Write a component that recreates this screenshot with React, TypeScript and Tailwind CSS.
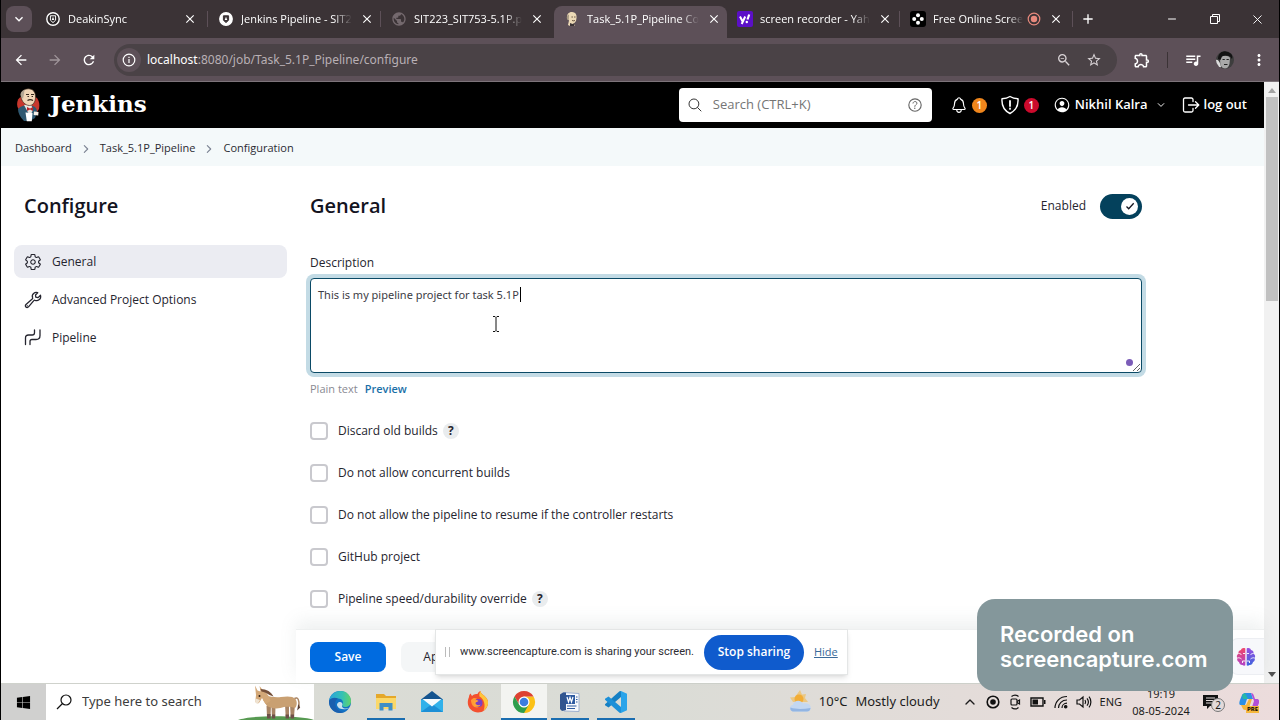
import type { ReactNode } from "react"
import clsx from "clsx"
import { ChevronUp, Minus, X } from "lucide-react"
import { FaWindows } from "react-icons/fa"
import {
  IoChevronDown,
  IoChevronForward,
  IoHelpCircleOutline,
  IoNotificationsOutline,
  IoPersonCircleOutline,
  IoSearchOutline,
  IoSettingsOutline,
} from "react-icons/io5"
import {
  MdAdd,
  MdArrowBack,
  MdArrowForward,
  MdClose,
  MdKeyboardArrowDown,
  MdMoreVert,
  MdOutlineExtension,
  MdPublic,
  MdQueueMusic,
  MdRefresh,
  MdStarOutline,
  MdZoomOut,
} from "react-icons/md"

/* ---------- drawings ---------- */

function DeakinIcon({ filled }: { filled?: boolean }) {
  return (
    <svg viewBox="0 0 16 16" className="size-4">
      <circle cx="8" cy="8" r="6.2" fill={filled ? "#fff" : "#2a2527"} stroke="#fff" strokeWidth="1.4" />
      <path
        d="M5.4 4.8h5.2v4.4L8 11.6 5.4 9.2Z"
        fill={filled ? "#3b3336" : "none"}
        stroke={filled ? "#3b3336" : "#fff"}
        strokeWidth="1"
      />
      <path d="M8 5.8 9.3 9H6.7Z" fill="#fff" />
    </svg>
  )
}

function JenkinsFavicon() {
  return (
    <svg viewBox="0 0 16 16" className="size-4">
      <path d="M4 14 5 9.5 3 7C2.6 3 5 .8 8.2 1c3 .2 4.6 2.2 4.4 5.6L12 10l-2 2.5.6 2.5H6Z" fill="#ecd9b6" />
      <path d="M4 3.5C2.5 5 2.6 7.5 3.4 9l1.4-.6L5 4Z" fill="#a79a83" />
      <path d="M7.500 6h1.300M10.200 6h1.300M8 9.300c1 .7 2 .7 3 0" stroke="#5a4634" strokeWidth="1" fill="none" />
      <path d="m6 12 2.500 1 2-1-.5 3H6Z" fill="#3a3335" />
    </svg>
  )
}

function YahooIcon() {
  return (
    <svg viewBox="0 0 16 16" className="size-4">
      <rect width="16" height="16" rx="2" fill="#5b0fc7" />
      <path d="m3 5.500 2.600 5M8.200 5.500 4.700 13" stroke="#fff" strokeWidth="2" fill="none" />
      <path d="m12.200 3.500-1.700 5" stroke="#fff" strokeWidth="2.2" />
      <circle cx="9.8" cy="11" r="1.2" fill="#fff" />
    </svg>
  )
}

function RecorderIcon() {
  return (
    <svg viewBox="0 0 16 16" className="size-4">
      <rect width="16" height="16" rx="3" fill="#000" />
      <g fill="#fff">
        <circle cx="8" cy="4.2" r="2" />
        <circle cx="8" cy="11.8" r="2" />
        <circle cx="4.2" cy="8" r="2" />
        <circle cx="11.8" cy="8" r="2" />
      </g>
    </svg>
  )
}

function RestoreIcon() {
  return (
    <svg viewBox="0 0 10 10" className="size-[10px]" fill="none" stroke="#fff">
      <path d="M.5 2.500h7v7h-7zM2.500 2.500v-2h7v7h-2" />
    </svg>
  )
}

function Avatar() {
  return (
    <svg viewBox="0 0 18 18" className="size-[18px]">
      <clipPath id="face">
        <circle cx="9" cy="9" r="9" />
      </clipPath>
      <g clipPath="url(#face)">
        <rect width="18" height="18" fill="#3d3d3d" />
        <path d="M4 7c1-3 9-3 10 0l-.5 6c-1 3-2.500 4.500-4.500 4.500s-4-1.500-4.700-4.500Z" fill="#a8a8a8" />
        <path d="M2 8C2 1 8-1 12 1c4 1 5 4 4 7l-2-2.500C11 4 8 4 6 5.500L4.500 9Z" fill="#131313" />
        <path d="M6.500 8.500h2.300M10.500 8.500h2.300M8 13.500h3.500" stroke="#222" strokeWidth="1.2" />
        <path d="M0 9c2-1 4 2 5 7l-3 2H0Z" fill="#dcdcdc" />
      </g>
    </svg>
  )
}

function JenkinsLogo() {
  return (
    <svg viewBox="0 0 24 34" className="h-[34px] w-6">
      <path d="M1.500 19C0 13 3 8 8 8h10c5 2 6 8 5 13l-4 6H6Z" fill="#c8372d" />
      <path d="M2 21c3-3 6-4 9-4l6 1c3 1 4 3 4 6l-2 6-5 3H8c-4-4-6-8-6-12Z" fill="#2f5870" />
      <path d="M8 17 15 16l2 6-3 6Z" fill="#e9e6e0" />
      <path d="m11 19 3 1.500 3-1.500v4l-3-1.500-3 1.500Z" fill="#b9262b" />
      <path
        d="M5 9C4 4 8 .7 12.500.8 17 1 19.600 4 19.500 9c0 5-2.500 8.500-6 8.500C9 17.500 5.500 13 5 9Z"
        fill="#f0d6b7"
        stroke="#3b2b20"
        strokeWidth=".7"
      />
      <path d="M5 8C3.500 5.500 6 2.500 8.500 2L8 6l-1 5Z" fill="#b3a693" />
      <path
        d="M10 6.500h3M15 6.500h3M11.500 8.500h1.400M15.600 8.500H17M11.500 12.500c1.500-1 4-1 5.500 0"
        stroke="#33261c"
        strokeWidth="1.1"
        fill="none"
      />
      <path d="m9.500 24.500 7 .4-.7 8.300h-5Z" fill="#fff" />
      <path d="m18 23.500 4.500.4-.3 3.600-4.500-.4Z" fill="#f6efe6" />
    </svg>
  )
}

function ShieldIcon() {
  return (
    <svg
      viewBox="0 0 20 20"
      className="size-5"
      fill="none"
      stroke="#fff"
      strokeWidth="1.4"
      strokeLinecap="round"
      strokeLinejoin="round"
    >
      <path d="M10 1.500C7.500 3 5 3.600 2 3.800c-.5 7 2 11.700 8 14.700 6-3 8.500-7.700 8-14.700-3-.2-5.500-.8-8-2.300Z" />
      <path d="M10 6v5M10 13.500v.4" strokeWidth="1.8" />
    </svg>
  )
}

function LogoutIcon() {
  return (
    <svg
      viewBox="0 0 18 18"
      className="size-[18px]"
      fill="none"
      stroke="#fff"
      strokeWidth="1.3"
      strokeLinecap="round"
      strokeLinejoin="round"
    >
      <path d="M11 5.500V3.500C11 2.500 10.200 2 9.500 2H3C2 2 1.500 2.700 1.500 3.500v11c0 1 .7 1.500 1.500 1.500h6.500c1 0 1.500-.7 1.500-1.500v-2" />
      <path d="M6.500 9h10M13.500 5.700 16.800 9l-3.300 3.300" />
    </svg>
  )
}

function WrenchIcon() {
  return (
    <svg
      viewBox="0 0 18 18"
      className="size-[18px]"
      fill="none"
      stroke="#25252f"
      strokeWidth="1.3"
      strokeLinecap="round"
      strokeLinejoin="round"
    >
      <path d="M16.500 4.300c.5 2-.2 3.600-1.500 4.500-1.200.9-2.700.9-3.900.5-.5-.2-1 0-1.300.4l-5.300 6.200c-.7.8-1.900.8-2.600.1s-.7-1.900.1-2.600l6.200-5.300c.4-.3.6-.8.4-1.300-.5-1.400-.3-3.300 1-4.400 1.200-1 2.700-1.200 4.100-.7L11.500 4l.3 2.200 2.300.4Z" />
      <path d="M3.200 14.800h.1" />
    </svg>
  )
}

function PipelineIcon() {
  return (
    <svg viewBox="0 0 18 18" className="size-[18px]" fill="none" stroke="#25252f" strokeWidth="1.3" strokeLinecap="round">
      <path d="M1.500 15.500V9c0-2 1-3 3-3h3.700c1.600 0 2.300-.7 2.300-2.300V1" />
      <path d="M6 15.500v-3c0-1.500.6-2 2-2h4c2.600 0 4-1.400 4-4V1" />
    </svg>
  )
}

function Donkey() {
  return (
    <svg viewBox="0 0 76 36" className="h-9 w-[76px] self-end">
      <path d="M0 36c12-5 62-5 76 0Z" fill="#579a52" />
      <path
        d="M28.500 22h4.500l-.5 11H29ZM33.500 22h4l-.3 11h-3.300ZM47 20h4v13h-3.300ZM52 20h5l-1 13h-3.300Z"
        fill="#a88465"
      />
      <path d="M29 30h3.600v4.500H29ZM34 30.500h3.200v4H34ZM47.600 30.500h3.400v4h-3.400ZM52.600 30.500h3.500v4h-3.500Z" fill="#6d5049" />
      <path d="M27 11c5 2 11 2.500 16 2 6-1 12-1 14.500 2 2 3 1.500 7-.5 9-4-1.500-8-1.500-11-1-5 2-12 2-17-1l-4-6Z" fill="#c9a072" />
      <path d="M17 1.500 19.500 6.500l3 1L21.500 2l4 5c4 2 6 6 7 10l-5 3-3.500-6-3 5c-3 1-4-1-3.500-3l.5-5Z" fill="#d3a878" />
      <path d="M22.500 5c6 0 11 3 13 7.500l-4-1.500c-3-2-5-3-8-3.500Z" fill="#75503a" />
      <path d="M17.500 14.500 22 16l-2 3.500c-3 .5-3-3-2.500-5Z" fill="#efe3d2" />
      <circle cx="21.500" cy="12" r="1" fill="#2a1b14" />
      <path d="M56.500 14.500c3.500-2 5 2 4.500 8" stroke="#a88465" strokeWidth="1.5" fill="none" />
      <path d="m60.200 20-1 6.500 3-3Z" fill="#5c3f33" />
    </svg>
  )
}

function EdgeIcon() {
  return (
    <svg viewBox="0 0 24 24" className="size-6">
      <defs>
        <linearGradient id="edgeTop" x1="0" x2="1">
          <stop offset="0" stopColor="#2aa3dd" />
          <stop offset=".6" stopColor="#35c1b4" />
          <stop offset="1" stopColor="#62d36a" />
        </linearGradient>
      </defs>
      <circle cx="12" cy="12" r="11" fill="#1272c4" />
      <path d="M1 11C2 4.500 7 1 12.500 1 19 1 23 6 23 11c0 4-3 6-6 6-2.500 0-3.500-1-2.500-2.500 1.500-3-.5-6-4.500-6S2 9 1 11Z" fill="url(#edgeTop)" />
      <path d="M1 11c1.500-3.500 6-4 9-2.500C7 10 6.500 14 8 17c1.500 3.500 5 5.500 9 4.800C11 25 1 21.500 1 11Z" fill="#1b5fae" />
      <path d="M14.500 14.500c-1.300 1.800 0 4 3.500 4 2 0 3.500-.8 4-1.200-1 .8-2.500 2-5 2-4 .2-7-1-7.800-3.500C8.500 14 10 12 12 12c1.500 0 2.500 1 2.500 2.500Z" fill="#e8f3f5" opacity=".85" />
    </svg>
  )
}

function ExplorerIcon() {
  return (
    <svg viewBox="0 0 24 24" className="size-6">
      <path d="M2 4h8l2 2h10v13H2Z" fill="#e5a82b" />
      <path d="M2 8h20v11H2Z" fill="#fbd869" />
      <path d="M5.500 20.500V13h13v7.500h-4V17h-5v3.500Z" fill="#3f8fc6" />
    </svg>
  )
}

function MailIcon() {
  return (
    <svg viewBox="0 0 24 24" className="size-6">
      <path d="M1 9.500 12 1l11 8.500V12H1Z" fill="#15548f" />
      <path d="M1 9.500h22V22H1Z" fill="#31b1ea" />
      <path d="m1 22 11-8 11 8Z" fill="#1c8fd6" />
      <path d="M2.500 9h19L12 16.500Z" fill="#f5fafd" />
    </svg>
  )
}

function FirefoxIcon() {
  return (
    <svg viewBox="0 0 24 24" className="size-6">
      <path d="M3 7c0-2 1-3 1.500-3.500L6 6c2-2 4-2 5.500-2C12 2.500 13 1.500 14.500 1c0 2 1.500 3 3.500 4.500C21 8 22.500 10.500 22 14c-1 5-5 8.500-10 8.500S2 18.500 1.800 13C1.700 10.500 2.300 8.500 3 7Z" fill="#f3502f" />
      <path d="M14.500 1c0 2 1.500 3 3.500 4.500 3 2.500 4.500 5 4 8.500-.6 3-2.300 5.300-4.500 6.800C20 15 18 9 13.500 6.500c-.5-2 0-4 1-5.500Z" fill="#ffc53a" />
      <path d="M5 10c2-2.500 4-2.500 6-1.500L9 11c1 2 4 2 5.500 1 1 3-1 5.500-4 5.500S5 14.500 5 10Z" fill="#ff9a34" />
      <circle cx="12.500" cy="13" r="4" fill="#7a3fc4" />
      <path d="M8 10.500c2-1 3.500-.5 4.500.5-1 1-2.500.8-3 2 0 2 3 3 5 1.500-1 3-6 3-7 0Z" fill="#ffa436" />
    </svg>
  )
}

function ChromeIcon() {
  return (
    <svg viewBox="0 0 24 24" className="size-6">
      <path d="M12 12V6.500h9.530A11 11 0 0 1 12 23Z" fill="#fbc116" />
      <path d="m12 23 4.800-8.300L12 12l-4 3Z" fill="#fbc116" />
      <path d="M2.470 6.500A11 11 0 0 1 21.530 6.500H12L8 9.500l-.8 5.200Z" fill="#dd4232" />
      <path d="M2.470 6.500 7.240 14.800 12 17.500 16.760 14.750 12 23A11 11 0 0 1 2.470 6.500Z" fill="#2f9e4c" />
      <circle cx="12" cy="12" r="5.5" fill="#fff" />
      <circle cx="12" cy="12" r="4.3" fill="#3b7de0" />
    </svg>
  )
}

function WordIcon() {
  return (
    <svg viewBox="0 0 24 24" className="size-6">
      <path d="M5.500 2.500 21 3.500v18l-15-.5Z" fill="#f7f9fc" stroke="#9fb1cf" />
      <path d="M2 4.500 5 2.500h3V20l-4 1-2-2Z" fill="#31558f" />
      <path d="M8 5h9v9H8Z" fill="#2d5aa0" />
      <path d="m9 7 1.500 5L12 7.500l1.500 4.500L15 7" stroke="#fff" strokeWidth="1.2" fill="none" />
      <path d="M9 16h9.500M9 18.500h8M18 7h1.500M18 9.500h1.500M18 12h1.500" stroke="#2d5aa0" strokeWidth="1.1" />
    </svg>
  )
}

function CodeIcon() {
  return (
    <svg viewBox="0 0 24 24" className="size-6">
      <path d="m17 1 6 2.800v16.400L17 23Z" fill="#2aa4ea" />
      <path d="M17 1v6L4.500 17.500 1 15.300v-1L15.500 1.300Z" fill="#1580c4" />
      <path d="M17 23v-6L4.500 6.500 1 8.700v1l14.500 13Z" fill="#1c90d8" />
    </svg>
  )
}

function WeatherIcon() {
  return (
    <svg viewBox="0 0 24 24" className="size-6">
      <path d="m12 0 2 4.500L18 4l-1 4 3 4H5L2 7.500l5-.5Z" fill="#f3ba4b" opacity=".6" />
      <circle cx="11" cy="9" r="4.5" fill="#f2ad36" />
      <path d="M6 21.500c-5 0-5.500-6-1-6.800C6 10 13 9.500 15 13.500c5-1.500 9 2 7.500 5.500C22 21 20.500 21.500 19 21.500Z" fill="#c3d7f1" />
      <path d="M6 21.500c-3 0-4-2-3.500-4 6 2 13 1.500 20 .5-.2 2.500-1.700 3.500-3.500 3.500Z" fill="#92b5e3" />
    </svg>
  )
}

function RecordDotIcon() {
  return (
    <svg viewBox="0 0 14 14" className="size-[14px]">
      <circle cx="7" cy="7" r="5.8" fill="none" stroke="#111" strokeWidth="1.6" />
      <circle cx="7" cy="7" r="2.8" fill="#111" />
    </svg>
  )
}

function MeetIcon() {
  return (
    <svg viewBox="0 0 14 16" className="h-4 w-[14px]" fill="none" stroke="#111" strokeWidth="1.2">
      <rect x="3" y="5" width="6" height="6" rx="1" />
      <path d="m9 7.500 2.500-1.500v4L9 8.500M3.500 2.500C5.500.8 8.500.8 10.500 2.500M3.500 13.500c2 1.700 5 1.700 7 0" />
    </svg>
  )
}

function BatteryIcon() {
  return (
    <svg viewBox="0 0 16 10" className="h-[10px] w-4">
      <path d="M1 1h12v8H1z" fill="none" stroke="#111" strokeWidth="1.4" />
      <path d="M2.500 2.500H8v5H2.500zM14 3h1.500v4H14z" fill="#111" />
    </svg>
  )
}

function WifiIcon() {
  return (
    <svg viewBox="0 0 14 14" className="size-[14px]" fill="none" stroke="#111" strokeWidth="1.2">
      <path d="M1 13C1 6.500 6 1.500 13 1.500M4.500 13c0-4.500 3.500-8 8.500-8M8 13c0-2.500 2-4.800 5-4.800" />
      <circle cx="11.7" cy="11.8" r="1.2" fill="#111" />
    </svg>
  )
}

function SpeakerIcon() {
  return (
    <svg viewBox="0 0 16 14" className="h-[14px] w-4" fill="none" stroke="#111" strokeWidth="1.2">
      <path d="M1 5h2.500L7 2v10L3.500 9H1ZM9 5c.8 1.200.8 2.800 0 4M11 3.300c1.700 2.200 1.700 5.200 0 7.400M13 1.700c2.500 3 2.500 7.600 0 10.600" />
    </svg>
  )
}

function NotificationIcon() {
  return (
    <svg viewBox="0 0 16 16" className="size-4">
      <path d="M0 1h15v11H7l-3 3v-3H0Z" fill="#111" />
      <path d="M3 4h9M3 6.500h9M3 9h6" stroke="#e3dada" />
    </svg>
  )
}

function CopilotIcon() {
  return (
    <svg viewBox="0 0 20 20" className="size-5">
      <path d="M6 1h6l2 6H8L6 13H2C0 13 0 11 1 8l2-5c.5-1 1.500-2 3-2Z" fill="#2a8fe6" />
      <path d="M12 1c1.500 0 2.500 1 3 3l1 3h2c2 0 2.500 2 2 4l-2 5c-.5 1-1 2-3 2h-3l3-9Z" fill="#b24fd6" />
      <path d="M2 13h5l3-6h3l-3 9c-.5 1.500-1.500 2-3 2H6c-1.500 0-2-1-2.500-2Z" fill="#f4b53c" />
      <path d="m6 1 3 6H4L3 3Z" fill="#27b9a6" />
    </svg>
  )
}

function BrainIcon() {
  return (
    <svg viewBox="0 0 20 20" className="size-5">
      <defs>
        <linearGradient id="brainLeft" x1="0" x2="0" y1="0" y2="1">
          <stop offset="0" stopColor="#f0476a" />
          <stop offset="1" stopColor="#b043c8" />
        </linearGradient>
        <linearGradient id="brainRight" x1="0" x2="0" y1="0" y2="1">
          <stop offset="0" stopColor="#9a4fe0" />
          <stop offset="1" stopColor="#3b63dd" />
        </linearGradient>
      </defs>
      <path d="M9.300 1.500c-2-1-4 0-4.300 1.500C3 3.300 2 5 2.600 6.500 1 7.500.3 9.500 1.300 11 .8 13 1.500 14.500 3 15c.3 2 2 3.300 3.500 3 1 1 2.300 1 2.800.3Z" fill="url(#brainLeft)" />
      <path d="M10.700 1.500c2-1 4 0 4.300 1.500 2 .3 3 2 2.400 3.500 1.600 1 2.300 3 1.300 4.500.5 2-.2 3.500-1.700 4-.3 2-2 3.300-3.500 3-1 1-2.300 1-2.800.3Z" fill="url(#brainRight)" />
      <path
        d="M2.600 6.500c1.500 0 2.400.5 2.900 1.500M9 6.500H7M1.300 11c1.500-.5 3 0 4.200 1M9 14H6.500v2M17.400 6.500c-1.500 0-2.400.5-2.900 1.500M11 6.500h2M18.700 11c-1.500-.5-3 0-4.200 1M11 14h2.500v2"
        stroke="#fff"
        strokeWidth=".9"
        fill="none"
      />
    </svg>
  )
}

/* ---------- data ---------- */

type Tab = { title: string; icon: ReactNode; active?: boolean; recording?: boolean }

const tabs: Tab[] = [
  { title: "DeakinSync", icon: <DeakinIcon /> },
  { title: "Jenkins Pipeline - SIT2", icon: <DeakinIcon filled /> },
  { title: "SIT223_SIT753-5.1P.p", icon: <MdPublic className="size-4 text-[#74696e]" /> },
  { title: "Task_5.1P_Pipeline Co", icon: <JenkinsFavicon />, active: true },
  { title: "screen recorder - Yah", icon: <YahooIcon /> },
  { title: "Free Online Scree", icon: <RecorderIcon />, recording: true },
]

const sections = [
  { label: "General", icon: <IoSettingsOutline className="size-[18px]" />, active: true },
  { label: "Advanced Project Options", icon: <WrenchIcon /> },
  { label: "Pipeline", icon: <PipelineIcon /> },
]

const options = [
  { id: "discard", label: "Discard old builds", help: true },
  { id: "concurrent", label: "Do not allow concurrent builds" },
  { id: "resume", label: "Do not allow the pipeline to resume if the controller restarts" },
  { id: "github", label: "GitHub project" },
  { id: "durability", label: "Pipeline speed/durability override", help: true },
]

const apps = [
  { name: "Edge", icon: <EdgeIcon /> },
  { name: "File Explorer", icon: <ExplorerIcon />, open: true },
  { name: "Mail", icon: <MailIcon /> },
  { name: "Firefox", icon: <FirefoxIcon /> },
  { name: "Chrome", icon: <ChromeIcon />, open: true, focused: true },
  { name: "Word", icon: <WordIcon />, open: true },
  { name: "Code", icon: <CodeIcon />, open: true },
]

/* ---------- browser ---------- */

function TabStrip() {
  return (
    <div className="flex h-[38px] shrink-0 bg-[#3b3336] text-white">
      <div className="flex w-[34px] shrink-0 items-center pl-[5px]">
        <button aria-label="Search tabs" className="flex size-[26px] items-center justify-center rounded-lg bg-[#5d5058]">
          <MdKeyboardArrowDown className="size-4" />
        </button>
      </div>
      {tabs.map((tab, i) => (
        <div
          key={tab.title}
          className={clsx(
            "relative flex min-w-0 max-w-[173px] flex-1 items-center pr-[11px] pl-[10px] text-[11px]",
            tab.active && "mt-1.5 rounded-t-lg bg-[#5d5058] pb-1.5",
          )}
        >
          <span className="shrink-0">{tab.icon}</span>
          <span className="ml-[7px] flex-1 [mask-image:linear-gradient(to_right,black_84%,transparent)] whitespace-nowrap">
            {tab.title}
          </span>
          {tab.recording && (
            <svg viewBox="0 0 14 14" className="ml-1 size-[14px] shrink-0">
              <circle cx="7" cy="7" r="5.8" fill="none" stroke="#e8897d" strokeWidth="1.2" />
              <circle cx="7" cy="7" r="3.2" fill="#e8897d" />
            </svg>
          )}
          <button aria-label="Close tab" className="ml-2 shrink-0">
            <MdClose className="size-[14px]" />
          </button>
          {i !== 2 && !tab.active && <span className="absolute right-0 h-4 w-px bg-[#5d5058]" />}
        </div>
      ))}
      <button aria-label="New tab" className="flex w-[30px] items-center justify-center">
        <MdAdd className="size-4" />
      </button>
      <div className="ml-auto flex">
        <button aria-label="Minimize" className="flex w-[43px] items-center justify-center">
          <Minus className="size-3" strokeWidth={2} />
        </button>
        <button aria-label="Restore" className="flex w-[43px] items-center justify-center">
          <RestoreIcon />
        </button>
        <button aria-label="Close" className="flex w-[43px] items-center justify-center">
          <X className="size-[15px]" strokeWidth={1.5} />
        </button>
      </div>
    </div>
  )
}

function Toolbar() {
  return (
    <div className="flex h-11 shrink-0 items-center border-b border-[#7d747a] bg-[#5d5058] text-white">
      <div className="flex w-[113px] shrink-0 items-center gap-[18px] pl-3">
        <button aria-label="Back">
          <MdArrowBack className="size-4" />
        </button>
        <button aria-label="Forward">
          <MdArrowForward className="size-4 text-[#a0969b]" />
        </button>
        <button aria-label="Reload">
          <MdRefresh className="size-4" />
        </button>
      </div>
      <div className="flex h-8 min-w-0 flex-1 items-center rounded-full bg-[#4a4246] pr-[15px] pl-[3px]">
        <span className="flex size-6 items-center justify-center rounded-full bg-[#5d5058]">
          <svg viewBox="0 0 14 14" className="size-[14px]" fill="none" stroke="#fff" strokeWidth="1.2">
            <circle cx="7" cy="7" r="5.8" />
            <path d="M7 6v4M7 3.800v1.200" />
          </svg>
        </span>
        <p className="ml-[6px] flex-1 truncate font-['Noto_Sans',sans-serif] text-xs text-[#b9b0b5]">
          <span className="text-white">localhost</span>:8080/job/Task_5.1P_Pipeline/configure
        </p>
        <MdZoomOut className="size-4 text-[#d8d2d5]" />
        <MdStarOutline className="ml-[14px] size-4 text-[#d8d2d5]" />
      </div>
      <div className="flex w-[162px] shrink-0 items-center pl-4">
        <MdOutlineExtension className="size-[18px]" />
        <span className="ml-4 h-4 w-px bg-[#3b3336]" />
        <MdQueueMusic className="ml-4 size-[18px]" />
        <span className="ml-[14px]">
          <Avatar />
        </span>
        <MdMoreVert className="ml-4 size-[18px]" />
      </div>
    </div>
  )
}

/* ---------- jenkins ---------- */

function JenkinsHeader() {
  return (
    <header className="flex h-[46px] shrink-0 items-center bg-black pr-[17px] pl-[15px] text-[13px] font-semibold text-white">
      <a href="#home" className="flex items-center">
        <JenkinsLogo />
        <span className="ml-[10px] pb-0.5 font-['DejaVu_Serif',serif] text-[23px] leading-7 font-bold">Jenkins</span>
      </a>
      <div className="ml-auto flex h-[34px] w-[253px] items-center rounded bg-white px-2 font-normal">
        <IoSearchOutline className="size-4 shrink-0 text-[#333]" />
        <input
          type="search"
          aria-label="Search"
          placeholder="Search (CTRL+K)"
          className="ml-[10px] min-w-0 flex-1 bg-transparent text-[13px] outline-none placeholder:text-[#757575]"
        />
        <IoHelpCircleOutline className="size-[18px] shrink-0 text-[#666]" />
      </div>
      <IoNotificationsOutline className="ml-[18px] size-[18px]" />
      <span className="ml-1 flex size-[15px] items-center justify-center rounded-full bg-[#f0861c] text-[10px]">1</span>
      <span className="ml-[13px]">
        <ShieldIcon />
      </span>
      <span className="ml-1 flex size-[15px] items-center justify-center rounded-full bg-[#cc0a2c] text-[10px]">1</span>
      <a href="#user" className="ml-[14px] flex items-center">
        <IoPersonCircleOutline className="size-[18px]" />
        <span className="ml-1">Nikhil Kalra</span>
      </a>
      <IoChevronDown className="ml-2 size-[10px]" />
      <a href="#logout" className="ml-4 flex items-center">
        <LogoutIcon />
        <span className="ml-1">log out</span>
      </a>
    </header>
  )
}

function Breadcrumbs() {
  const chevron = <IoChevronForward className="mx-2 size-3 text-[#7c8494]" />
  return (
    <nav className="flex h-[38px] shrink-0 items-center bg-[#f4f9fa] pt-[3px] pl-[14px] text-[11px] text-[#2b2b33]">
      <a href="#dashboard">Dashboard</a>
      {chevron}
      <a href="#job">Task_5.1P_Pipeline</a>
      {chevron}
      <a href="#configuration">Configuration</a>
    </nav>
  )
}

function SideMenu() {
  return (
    <aside className="w-[286px] shrink-0 pl-[13px]">
      <h1 className="pl-[10px] text-xl leading-7 font-semibold text-[#14141f]">Configure</h1>
      <nav className="mt-[25px] flex flex-col gap-[5px]">
        {sections.map((section) => (
          <a
            key={section.label}
            href={"#" + section.label}
            className={clsx("flex h-[33px] items-center rounded-lg px-[10px]", section.active && "bg-[#ebecf2]")}
          >
            {section.icon}
            <span className="ml-[10px]">{section.label}</span>
          </a>
        ))}
      </nav>
    </aside>
  )
}

function ConfigForm() {
  return (
    <main className="ml-[23px] max-w-[832px] min-w-0 flex-1">
      <div className="flex h-7 items-center">
        <h2 className="text-xl leading-7 font-semibold text-[#14141f]">General</h2>
        <label className="ml-auto flex items-center gap-[14px]">
          Enabled
          <input type="checkbox" defaultChecked className="peer sr-only" />
          <span className="flex h-[25px] w-[42px] items-center justify-end rounded-full bg-[#04415c] pr-1">
            <span className="flex size-[17px] items-center justify-center rounded-full bg-white">
              <svg viewBox="0 0 10 10" className="size-[10px]" fill="none" stroke="#14141f" strokeWidth="1.3">
                <path d="m1.500 5.500 2.200 2.200 5-5.500" />
              </svg>
            </span>
          </span>
        </label>
      </div>

      <label htmlFor="description" className="mt-[33px] block leading-5">
        Description
      </label>
      <div className="relative mt-[5px]">
        <textarea
          id="description"
          defaultValue="This is my pipeline project for task 5.1P"
          className="block h-[95px] w-full rounded border border-[#0b4a66] bg-white px-[7px] py-[6px] font-['Noto_Sans',sans-serif] text-[11px] leading-5 text-[#3c3c44] ring-4 ring-[#c3dbe5] outline-none"
        />
        <span className="absolute top-[9px] left-[210px] h-[15px] w-px bg-black" />
        <svg viewBox="0 0 8 16" className="absolute top-[38px] left-[182px] h-4 w-2" fill="none" stroke="#111">
          <path d="M1 .5h2l1 1 1-1h2M1 15.500h2l1-1 1 1h2M4 1.500v13" />
        </svg>
        <span className="absolute right-[9px] bottom-[7px] size-[7px] rounded-full bg-[#7b5cb8]" />
      </div>
      <div className="mt-[6px] flex gap-[7px] text-[11px] leading-5">
        <span className="text-[#8a8a93]">Plain text</span>
        <a href="#preview" className="font-semibold text-[#1a70a8]">
          Preview
        </a>
      </div>

      <ul className="mt-[21px] flex flex-col gap-5">
        {options.map((option) => (
          <li key={option.id} className="flex h-[22px] items-center">
            <input
              type="checkbox"
              id={option.id}
              className="size-[18px] appearance-none rounded border-2 border-[#c9c9ce] bg-white"
            />
            <label htmlFor={option.id} className="ml-[10px]">
              {option.label}
            </label>
            {option.help && (
              <button className="ml-[5px] flex size-4 items-center justify-center rounded-full bg-[#e9ecee] text-xs font-bold">
                ?
              </button>
            )}
          </li>
        ))}
      </ul>
    </main>
  )
}

function Scrollbar() {
  return (
    <div className="flex w-[15px] shrink-0 flex-col items-center bg-[#f1f1f1] py-1.5">
      <svg viewBox="0 0 8 5" className="h-[5px] w-2">
        <path d="M4 0l4 5H0Z" fill="#a3a3a3" />
      </svg>
      <div className="mt-1 h-[204px] w-3 bg-[#c1c1c1]" />
      <svg viewBox="0 0 8 5" className="mt-auto h-[5px] w-2">
        <path d="M4 5 0 0h8Z" fill="#505050" />
      </svg>
    </div>
  )
}

function SharingBar() {
  return (
    <div className="absolute bottom-2 left-[434px] flex h-[46px] items-center border border-[#e4e6e6] bg-white px-[9px] text-[#2d2d33] shadow-md">
      <span className="h-[10px] w-[5px] border-x border-[#bbb]" />
      <span className="ml-[10px] font-['Roboto',sans-serif] text-[11px] whitespace-nowrap">
        www.screencapture.com is sharing your screen.
      </span>
      <button className="ml-[10px] h-[35px] w-[100px] rounded-full bg-[#0f5bcd] text-xs font-semibold whitespace-nowrap text-white">
        Stop sharing
      </button>
      <a href="#hide" className="ml-[10px] text-[11px] text-[#3a6a9a] underline">
        Hide
      </a>
    </div>
  )
}

/* ---------- windows ---------- */

function Taskbar() {
  return (
    <footer className="flex h-[37px] shrink-0 items-stretch border-t border-[#cfd2cc] bg-linear-to-r from-[#dadbd4] via-[#dadcd6] to-[#ecdcdc] font-['Noto_Sans',sans-serif] text-[#1c1c1c]">
      <button aria-label="Start" className="flex w-[45px] shrink-0 items-center justify-center bg-[#d0d0cf] text-black">
        <FaWindows className="size-[15px]" />
      </button>
      <label className="flex w-[268px] shrink-0 items-center bg-white pl-[10px]">
        <svg viewBox="0 0 16 16" className="size-4 shrink-0" fill="none" stroke="#111" strokeWidth="1.2">
          <circle cx="10" cy="6" r="5" />
          <path d="M6.500 9.500 1 15" />
        </svg>
        <input
          aria-label="Type here to search"
          placeholder="Type here to search"
          className="ml-[10px] min-w-0 flex-1 text-[13px] outline-none placeholder:text-[#3c3c3c]"
        />
        <Donkey />
      </label>
      <div className="flex pl-[3px]">
        {apps.map((app) => (
          <button
            key={app.name}
            aria-label={app.name}
            className={clsx("relative flex w-[46px] items-center justify-center", app.focused && "bg-[#f3f4f1]")}
          >
            {app.icon}
            {app.open && (
              <span
                className={clsx("absolute bottom-0 h-0.5 bg-[#1a6db0]", app.focused ? "inset-x-0" : "inset-x-1")}
              />
            )}
          </button>
        ))}
      </div>
      <div className="ml-auto flex items-center text-[13px] whitespace-nowrap">
        <WeatherIcon />
        <span className="ml-[7px]">10°C</span>
        <span className="ml-2">Mostly cloudy</span>
      </div>
      <div className="ml-[22px] flex items-center gap-[8px]">
        <ChevronUp className="size-4" strokeWidth={2} />
        <RecordDotIcon />
        <MeetIcon />
        <BatteryIcon />
        <WifiIcon />
        <SpeakerIcon />
        <span className="text-[11px]">ENG</span>
      </div>
      <div className="ml-[11px] flex w-[56px] flex-col items-center justify-center text-[11px] leading-[17px] whitespace-nowrap">
        <span>19:19</span>
        <span>08-05-2024</span>
      </div>
      <div className="flex w-[90px] items-center justify-end pr-5">
        <button aria-label="Notifications" className="relative mr-5">
          <NotificationIcon />
          <span className="absolute top-1 left-2 flex size-[14px] items-center justify-center rounded-full border border-[#777] bg-[#e3dada] text-[10px]">
            2
          </span>
        </button>
        <span className="relative">
          <CopilotIcon />
          <span className="absolute right-0 -bottom-px bg-[#f5b83d] px-px text-[6px] leading-[7px] font-bold text-black">
            PRE
          </span>
        </span>
      </div>
    </footer>
  )
}

export default function App() {
  return (
    <div className="relative flex h-screen flex-col overflow-hidden border-x border-black bg-white font-['Open_Sans',sans-serif] text-[13px] text-[#25252f]">
      <TabStrip />
      <Toolbar />
      <div className="relative flex min-h-0 flex-1">
        <div className="flex min-w-0 flex-1 flex-col">
          <JenkinsHeader />
          <Breadcrumbs />
          <div className="flex min-h-0 flex-1 overflow-hidden pt-[26px] text-xs">
            <SideMenu />
            <ConfigForm />
          </div>
          <div className="relative ml-[295px] flex h-[54px] shrink-0 items-center border-t border-[#eef0f0] bg-white pl-[14px] text-xs shadow-[0_-8px_16px_rgba(120,140,140,0.12)]">
            <button className="h-[30px] w-[76px] rounded-lg bg-[#006be0] font-semibold text-white">Save</button>
            <button className="ml-[15px] h-[30px] w-[76px] rounded-lg bg-[#f4f6f7]">Apply</button>
            <button
              aria-label="Assistant"
              className="ml-auto flex h-[37px] w-[34px] items-center justify-end rounded-l-lg border border-r-0 border-[#eceef2] bg-[#f7f8fb] pr-2"
            >
              <BrainIcon />
            </button>
          </div>
        </div>
        <Scrollbar />
        <SharingBar />
      </div>
      <Taskbar />
      <div className="absolute right-[46px] bottom-[29px] flex h-[92px] w-[256px] flex-col justify-center rounded-[18px] bg-[#84979b] pt-1 pl-[23px] font-['Inter',sans-serif] text-[22px] leading-[25px] font-semibold text-white">
        <span>Recorded on</span>
        <span>screencapture.com</span>
      </div>
    </div>
  )
}
